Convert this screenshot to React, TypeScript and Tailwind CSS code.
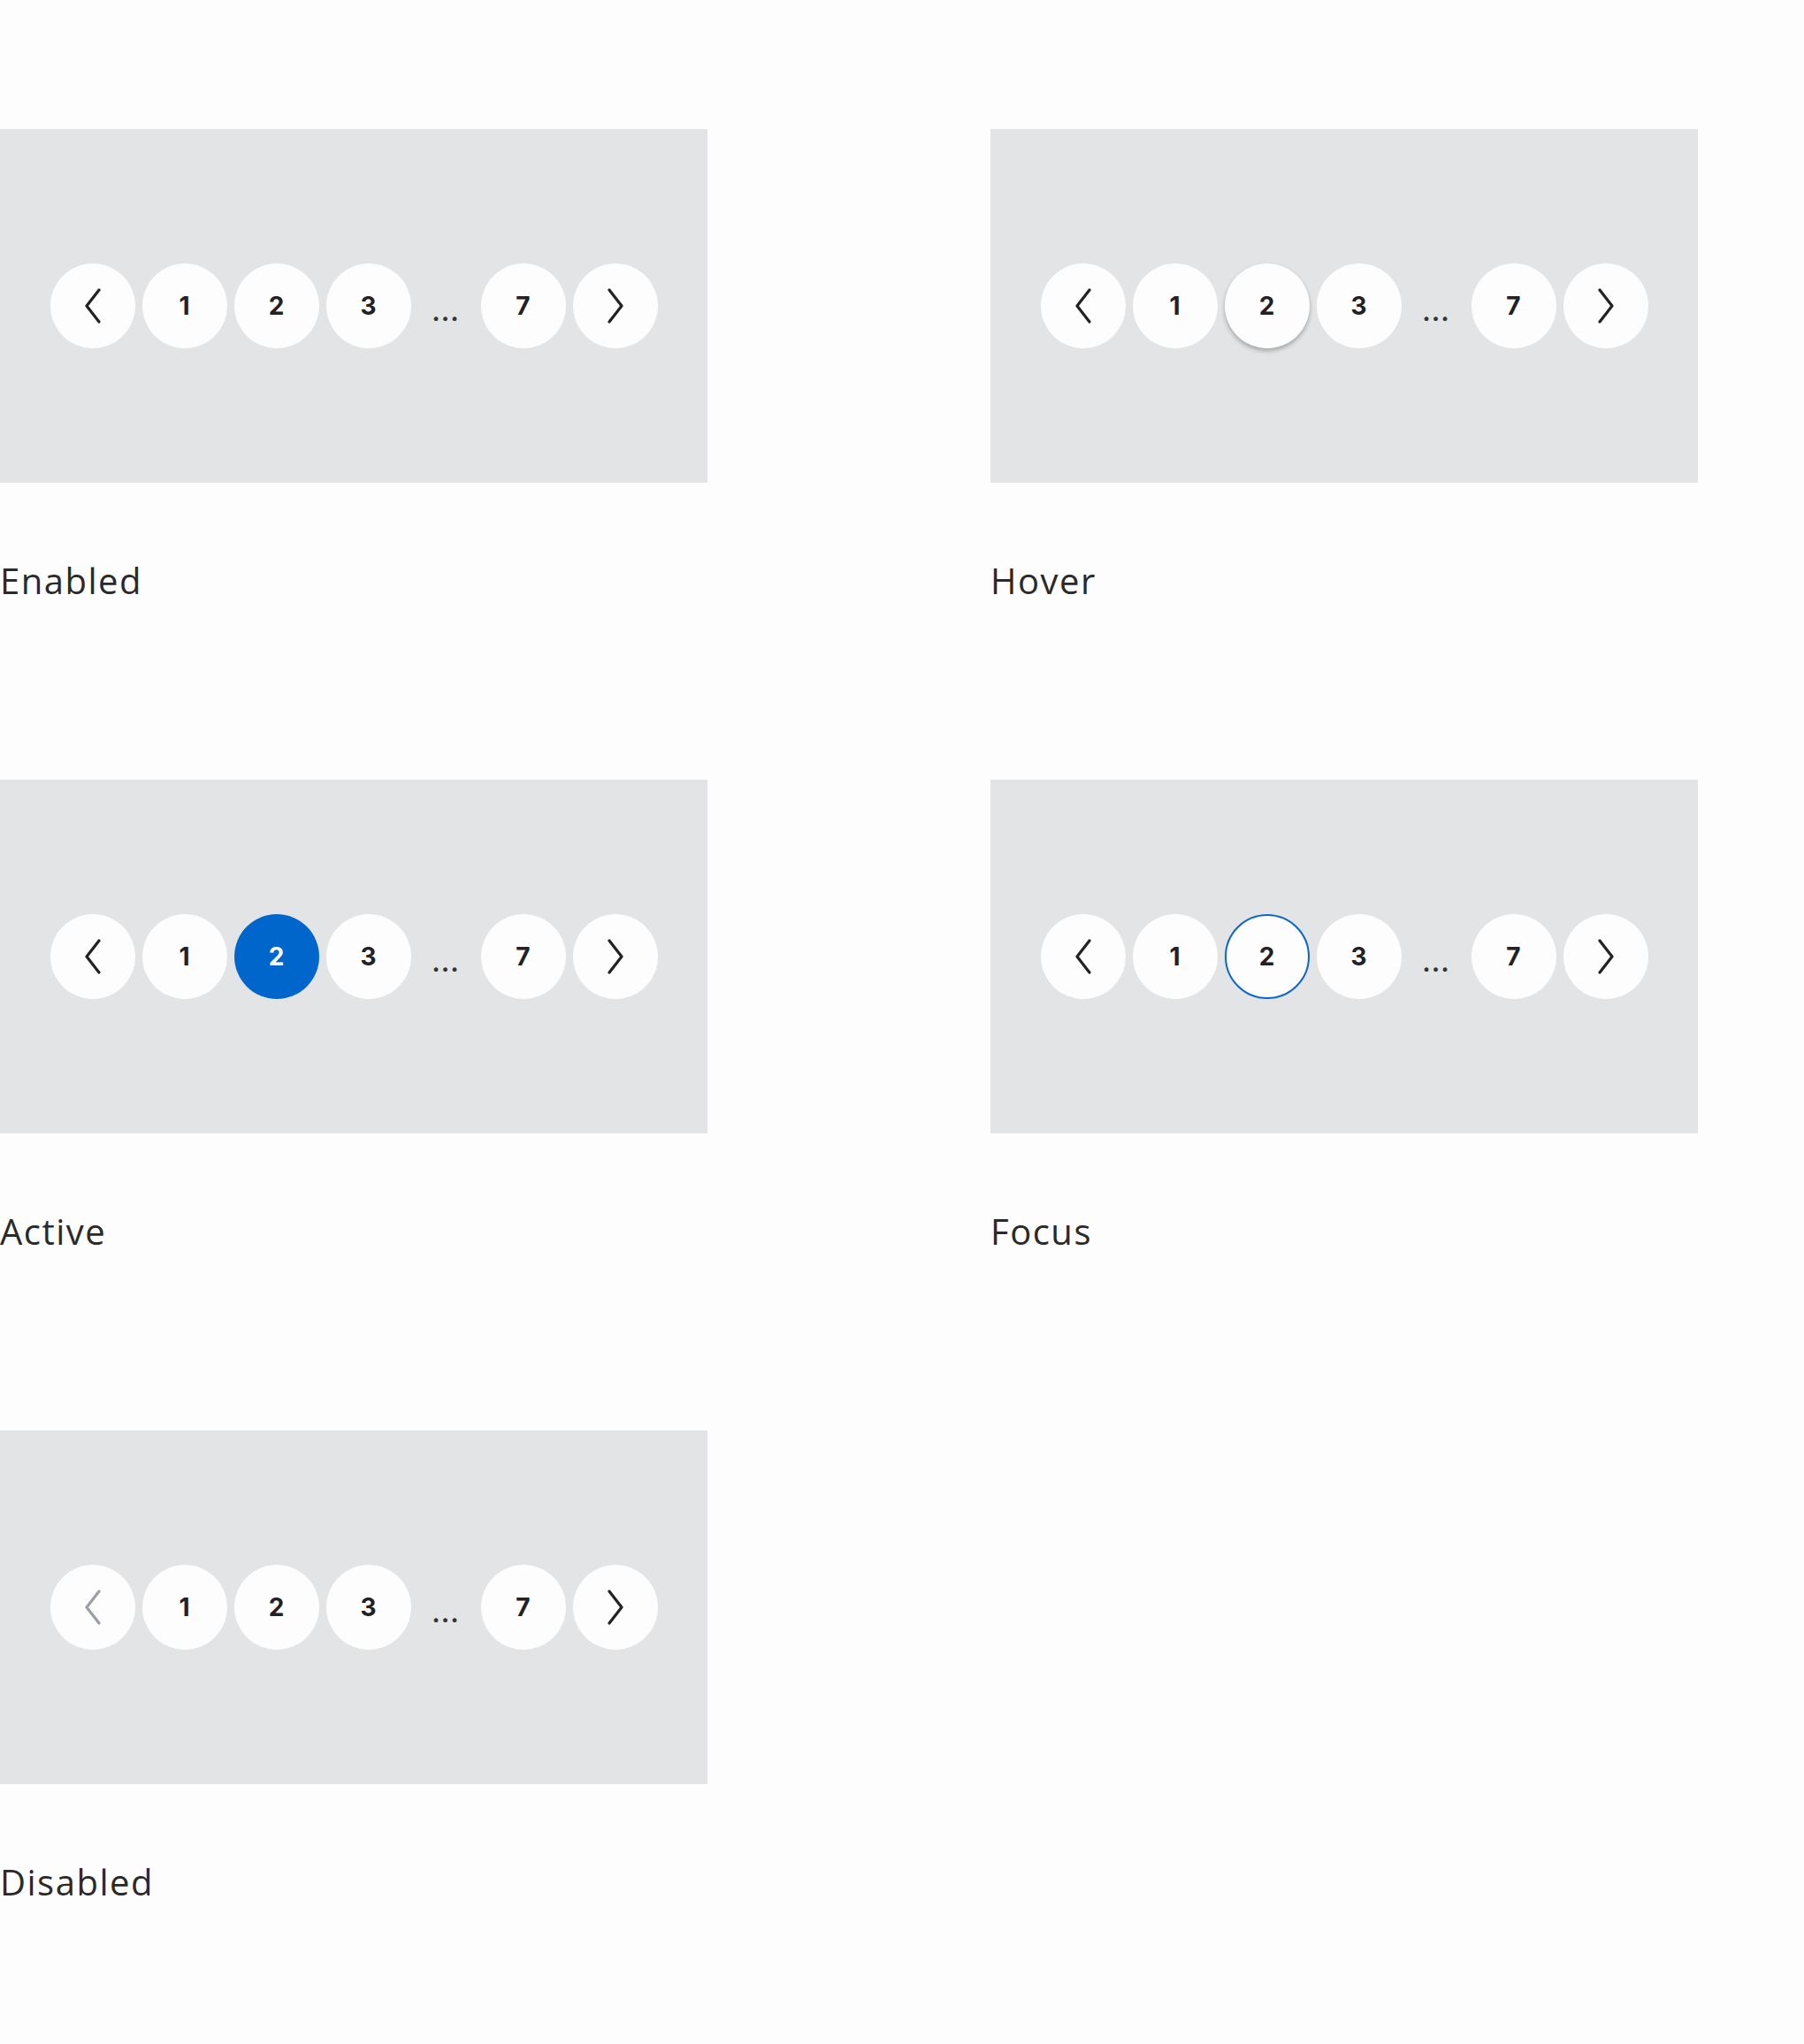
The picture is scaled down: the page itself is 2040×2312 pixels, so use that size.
import { ReactNode } from "react"

type Variant = "enabled" | "hover" | "active" | "focus" | "disabled"

function Chevron({ dir, muted }: { dir: "left" | "right"; muted?: boolean }) {
  const points = dir === "left" ? "18,2 4,20 18,38" : "4,2 18,20 4,38"
  return (
    <svg width="22" height="40" viewBox="0 0 22 40" fill="none">
      <polyline
        points={points}
        stroke={muted ? "#9aa0a6" : "#222222"}
        strokeWidth="3.2"
        strokeLinecap="round"
        strokeLinejoin="round"
      />
    </svg>
  )
}

function Circle({ children, className = "" }: { children: ReactNode; className?: string }) {
  return (
    <div
      className={`flex h-24 w-24 items-center justify-center rounded-full bg-[#fdfdfd] text-[28px] font-bold text-[#222222] ${className}`}
    >
      {children}
    </div>
  )
}

function Pagination({ variant }: { variant: Variant }) {
  const pageTwo =
    variant === "hover"
      ? "shadow-[0_3px_5px_rgba(0,0,0,0.28)]"
      : variant === "active"
        ? "!bg-[#0066cc] !text-white"
        : variant === "focus"
          ? "border-2 border-[#0a66c8]"
          : ""

  return (
    <div className="flex items-center gap-2" style={{ fontFamily: "Inter, sans-serif" }}>
      <Circle>
        <Chevron dir="left" muted={variant === "disabled"} />
      </Circle>
      <Circle>1</Circle>
      <Circle className={pageTwo}>2</Circle>
      <Circle>3</Circle>
      <div className="flex w-[63px] justify-center pt-3 text-[30px] font-semibold tracking-[1px] text-[#333333]">
        ...
      </div>
      <Circle>7</Circle>
      <Circle>
        <Chevron dir="right" />
      </Circle>
    </div>
  )
}

export default function App() {
  const states: { variant: Variant; label: string }[] = [
    { variant: "enabled", label: "Enabled" },
    { variant: "hover", label: "Hover" },
    { variant: "active", label: "Active" },
    { variant: "focus", label: "Focus" },
    { variant: "disabled", label: "Disabled" },
  ]

  return (
    <div className="min-h-[2312px] w-[2040px] bg-[#fdfdfd] pt-[146px]">
      <div className="grid grid-cols-[800px_800px] gap-x-[320px] gap-y-[204px]">
        {states.map((s) => (
          <div key={s.variant}>
            <div className="flex h-[400px] items-center justify-center bg-[#e3e4e6]">
              <Pagination variant={s.variant} />
            </div>
            <p
              className="mt-[87px] mb-[-3px] text-[40px] leading-[48px] tracking-[1.5px] text-[#2a2a2a]"
              style={{ fontFamily: "'Open Sans', sans-serif" }}
            >
              {s.label}
            </p>
          </div>
        ))}
      </div>
    </div>
  )
}
